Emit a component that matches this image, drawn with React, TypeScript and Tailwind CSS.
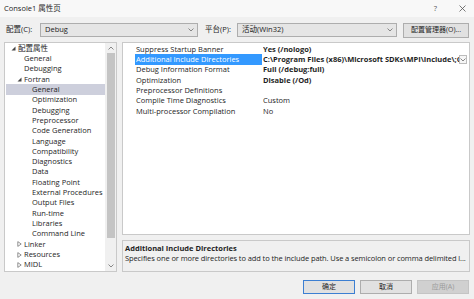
import React from "react";

const font = { fontFamily: '"Open Sans", "Noto Sans CJK SC", sans-serif' };

type Node = { label: string; level: number; icon?: "open" | "closed"; selected?: boolean };

const tree: Node[] = [
  { label: "配置属性", level: 0, icon: "open" },
  { label: "General", level: 1 },
  { label: "Debugging", level: 1 },
  { label: "Fortran", level: 1, icon: "open" },
  { label: "General", level: 2, selected: true },
  { label: "Optimization", level: 2 },
  { label: "Debugging", level: 2 },
  { label: "Preprocessor", level: 2 },
  { label: "Code Generation", level: 2 },
  { label: "Language", level: 2 },
  { label: "Compatibility", level: 2 },
  { label: "Diagnostics", level: 2 },
  { label: "Data", level: 2 },
  { label: "Floating Point", level: 2 },
  { label: "External Procedures", level: 2 },
  { label: "Output Files", level: 2 },
  { label: "Run-time", level: 2 },
  { label: "Libraries", level: 2 },
  { label: "Command Line", level: 2 },
  { label: "Linker", level: 1, icon: "closed" },
  { label: "Resources", level: 1, icon: "closed" },
  { label: "MIDL", level: 1, icon: "closed" },
  { label: "Manifest Tool", level: 1, icon: "closed" },
];

const props: { name: string; value: string; bold?: boolean; selected?: boolean }[] = [
  { name: "Suppress Startup Banner", value: "Yes (/nologo)", bold: true },
  {
    name: "Additional Include Directories",
    value: "C:\\Program Files (x86)\\Microsoft SDKs\\MPI\\Include\\;C:\\",
    bold: true,
    selected: true,
  },
  { name: "Debug Information Format", value: "Full (/debug:full)", bold: true },
  { name: "Optimization", value: "Disable (/Od)", bold: true },
  { name: "Preprocessor Definitions", value: "" },
  { name: "Compile Time Diagnostics", value: "Custom" },
  { name: "Multi-processor Compilation", value: "No" },
];

function Chevron({ className = "" }: { className?: string }) {
  return (
    <svg width="6" height="4" viewBox="0 0 6 4" className={className}>
      <path d="M0.5 0.5 L3 3 L5.5 0.5" fill="none" stroke="#7a7a7a" strokeWidth="0.9" />
    </svg>
  );
}

function TreeIcon({ kind }: { kind: "open" | "closed" }) {
  if (kind === "open")
    return (
      <svg width="5" height="5" viewBox="0 0 5 5">
        <path d="M4.5 0.5 L4.5 4.5 L0.5 4.5 Z" fill="#444" />
      </svg>
    );
  return (
    <svg width="5" height="6" viewBox="0 0 5 6">
      <path d="M0.8 0.6 L4.2 3 L0.8 5.4 Z" fill="none" stroke="#777" strokeWidth="0.8" />
    </svg>
  );
}

function Combo({ text, w }: { text: string; w: string }) {
  return (
    <div
      className={`${w} shrink-0 h-[14px] bg-[#e5e5e5] border border-[#adadad] flex items-center justify-between pl-[4px] pr-[3px] text-[7.5px] text-[#222]`}
    >
      <span>{text}</span>
      <Chevron />
    </div>
  );
}

export default function App() {
  return (
    <div className="w-[474px] h-[299px] bg-[#f0f0f0] flex flex-col overflow-hidden text-[#1e1e1e]" style={font}>
      {/* title bar */}
      <div className="h-[17px] bg-[#f8f8f8] flex items-center justify-between pl-[4px] pr-[8px] text-[7.5px]">
        <span>Console1 属性页</span>
        <div className="flex items-center gap-[22px] text-[#555]">
          <span className="text-[7.5px]">?</span>
          <svg width="7" height="7" viewBox="0 0 7 7">
            <path d="M0.5 0.5 L6.5 6.5 M6.5 0.5 L0.5 6.5" stroke="#555" strokeWidth="0.8" />
          </svg>
        </div>
      </div>

      {/* config row */}
      <div className="mt-[6px] h-[14px] flex items-center pl-[6px] pr-[5px] text-[7.5px]">
        <span className="w-[34px] shrink-0">配置(C):</span>
        <Combo text="Debug" w="w-[158px]" />
        <span className="ml-[7px] w-[32px] shrink-0">平台(P):</span>
        <Combo text="活动(Win32)" w="w-[160px]" />
        <div className="ml-[6px] flex-1 h-[15px] bg-[#e1e1e1] border border-[#adadad] flex items-center justify-center text-[7px] whitespace-nowrap">
          配置管理器(O)...
        </div>
      </div>

      {/* main area */}
      <div className="mt-[5px] h-[230px] flex px-[4px] gap-[5px]">
        {/* tree */}
        <div className="w-[113px] shrink-0 h-full bg-white border border-[#c9c9c9] flex overflow-hidden">
          <div className="flex-1 pl-[1px] overflow-hidden text-[7.5px]">
            {tree.map((n, i) => (
              <div
                key={i}
                className={`h-[10.33px] flex items-center whitespace-nowrap ${n.selected ? "bg-[#cdcfdc]" : ""}`}
              >
                <div
                  className={`shrink-0 flex items-center justify-end pr-[2px] ${
                    n.level === 0 ? "w-[12px]" : n.level === 1 ? "w-[18px]" : "w-[26px]"
                  }`}
                >
                  {n.icon && <TreeIcon kind={n.icon} />}
                </div>
                <span>{n.label}</span>
              </div>
            ))}
          </div>
          <div className="w-[11px] shrink-0 h-full bg-[#f0f0f0] flex flex-col items-center">
            <div className="h-[10px] flex items-center">
              <Chevron className="rotate-180" />
            </div>
            <div className="w-[8px] h-[185px] bg-[#c4c4c4]" />
            <div className="flex-1" />
            <div className="h-[11px] flex items-center">
              <Chevron />
            </div>
          </div>
        </div>

        {/* right */}
        <div className="flex-1 min-w-0 flex flex-col gap-[5px]">
          <div className="h-[194px] bg-white border border-[#c9c9c9] pt-[1px] pl-[12px] pr-[2px] text-[7.5px] overflow-hidden">
            {props.map((p, i) => (
              <div key={i} className="h-[10.33px] flex items-center whitespace-nowrap">
                <div
                  className={`w-[127px] shrink-0 h-full flex items-center pl-[1px] ${
                    p.selected ? "bg-[#3399ff] text-white" : ""
                  }`}
                >
                  {p.name}
                </div>
                <div className={`flex-1 min-w-0 flex items-center pl-[1px] ${p.bold ? "font-bold" : ""}`}>
                  <span className="flex-1 min-w-0 overflow-hidden">{p.value}</span>
                  {p.selected && (
                    <div className="w-[8px] shrink-0 h-[9px] border border-[#bcbcbc] bg-[#f6f6f6] flex items-center justify-center">
                      <Chevron />
                    </div>
                  )}
                </div>
              </div>
            ))}
          </div>
          <div className="h-[32px] bg-[#f0f0f0] border border-[#c9c9c9] pl-[2px] pt-[2px] text-[7.5px] leading-[10px] overflow-hidden">
            <div className="font-bold">Additional Include Directories</div>
            <div className="whitespace-nowrap tracking-[-0.1px]">
              Specifies one or more directories to add to the include path. Use a semicolon or comma delimited l...
            </div>
          </div>
        </div>
      </div>

      {/* buttons */}
      <div className="mt-[8px] flex justify-end gap-[5px] pr-[5px] text-[7px]">
        <div className="w-[52px] h-[14px] bg-[#e1e1e1] border border-[#3c7fd2] flex items-center justify-center">确定</div>
        <div className="w-[52px] h-[14px] bg-[#e1e1e1] border border-[#adadad] flex items-center justify-center">取消</div>
        <div className="w-[52px] h-[14px] bg-[#d0d0d0] border border-[#c4c4c4] text-[#9a9a9a] flex items-center justify-center">
          应用(A)
        </div>
      </div>
    </div>
  );
}
